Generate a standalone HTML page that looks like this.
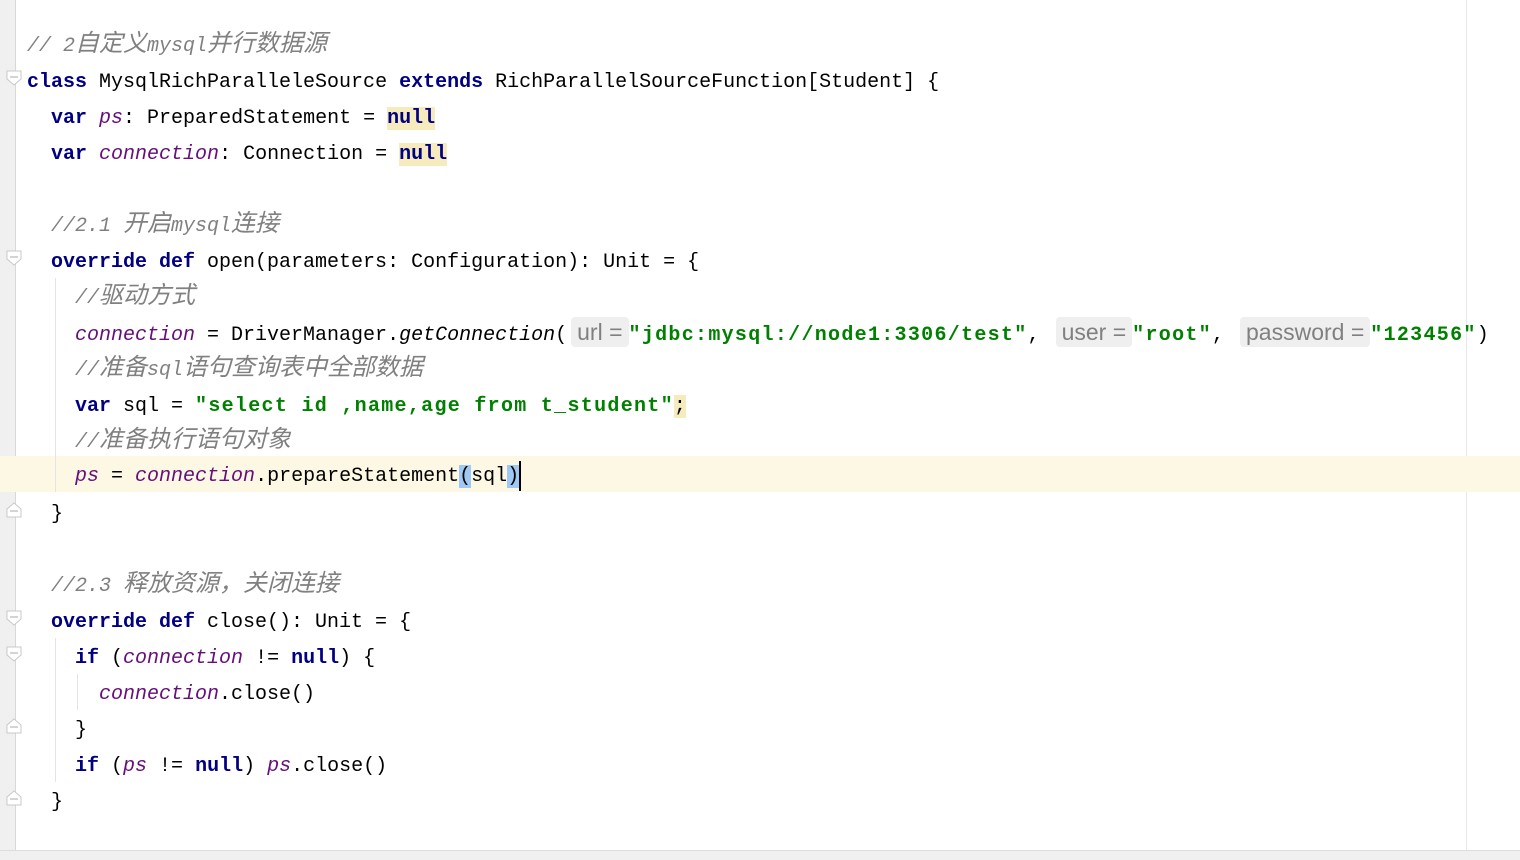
<!DOCTYPE html>
<html><head><meta charset="utf-8"><style>
body{margin:0;width:1520px;height:859px;background:#fff;position:relative;overflow:hidden;font-family:"Liberation Mono","Noto Sans CJK SC",monospace;font-size:20px;color:#000}
.g{position:absolute;left:0;top:0;width:15px;height:850px;background:#f0f0f0;border-right:1px solid #d8d8d8}
.rm{position:absolute;left:1466px;top:0;width:1px;height:850px;background:#e8e8e8}
.sb{position:absolute;left:0;top:850px;width:1520px;height:9px;background:#f0f0f0;border-top:1px solid #ddd}
.hl{position:absolute;left:0;top:456px;width:1520px;height:36px;background:#fdf8e4}
.l{position:absolute;height:36px;line-height:36px;white-space:pre}
.c{color:#808080;font-style:italic}
.z{font-size:24px;line-height:20px}
.k{color:#000080;font-weight:bold}
.p{color:#660e7a;font-style:italic}
.s{color:#008000;font-weight:bold;letter-spacing:1.3px}
.i{font-style:italic}
.n{background:#f6ebbc}
.h{font-family:"Liberation Sans",sans-serif;color:#808080;background:#efefef;border-radius:4px;padding:0 6px;margin-left:4px;font-size:23px;line-height:30px;display:inline-block}
.f{position:absolute;left:6px;width:16px;height:16px}
.vg{position:absolute;width:1px;background:#e4e4e4}
.cur{display:inline-block;width:2px;height:30px;background:#000;vertical-align:middle}
.mb{background:#9fc9f5}
</style></head><body>
<div class="g"></div><div class="rm"></div><div class="hl"></div><div class="sb"></div>
<div class="vg" style="left:55px;top:278px;height:214px"></div>
<div class="vg" style="left:55px;top:638px;height:144px"></div>
<div class="vg" style="left:77px;top:674px;height:36px"></div>
<svg class="f" style="top:70px" viewBox="0 0 16 16"><path d="M1 1H15V9L8 15L1 9Z" fill="#fff" stroke="#c8c8c8"/><path d="M4 7H12" stroke="#aaa"/></svg>
<svg class="f" style="top:250px" viewBox="0 0 16 16"><path d="M1 1H15V9L8 15L1 9Z" fill="#fff" stroke="#c8c8c8"/><path d="M4 7H12" stroke="#aaa"/></svg>
<svg class="f" style="top:610px" viewBox="0 0 16 16"><path d="M1 1H15V9L8 15L1 9Z" fill="#fff" stroke="#c8c8c8"/><path d="M4 7H12" stroke="#aaa"/></svg>
<svg class="f" style="top:646px" viewBox="0 0 16 16"><path d="M1 1H15V9L8 15L1 9Z" fill="#fff" stroke="#c8c8c8"/><path d="M4 7H12" stroke="#aaa"/></svg>
<svg class="f" style="top:502px" viewBox="0 0 16 16"><path d="M1 15H15V7L8 1L1 7Z" fill="#fff" stroke="#c8c8c8"/><path d="M4 9H12" stroke="#aaa"/></svg>
<svg class="f" style="top:718px" viewBox="0 0 16 16"><path d="M1 15H15V7L8 1L1 7Z" fill="#fff" stroke="#c8c8c8"/><path d="M4 9H12" stroke="#aaa"/></svg>
<svg class="f" style="top:790px" viewBox="0 0 16 16"><path d="M1 15H15V7L8 1L1 7Z" fill="#fff" stroke="#c8c8c8"/><path d="M4 9H12" stroke="#aaa"/></svg>

<div class="l" style="left:27px;top:29px"><span class="c">// 2<span class="z">自定义</span>mysql<span class="z">并行数据源</span></span></div>
<div class="l" style="left:27px;top:65px"><span class="k">class</span> MysqlRichParalleleSource <span class="k">extends</span> RichParallelSourceFunction[Student] {</div>
<div class="l" style="left:51px;top:101px"><span class="k">var</span> <span class="p">ps</span>: PreparedStatement = <span class="k n">null</span></div>
<div class="l" style="left:51px;top:137px"><span class="k">var</span> <span class="p">connection</span>: Connection = <span class="k n">null</span></div>
<div class="l" style="left:51px;top:209px"><span class="c">//2.1 <span class="z">开启</span>mysql<span class="z">连接</span></span></div>
<div class="l" style="left:51px;top:245px"><span class="k">override def</span> open(parameters: Configuration): Unit = {</div>
<div class="l" style="left:75px;top:281px"><span class="c">//<span class="z">驱动方式</span></span></div>
<div class="l" style="left:75px;top:317px"><span class="p">connection</span> = DriverManager.<span class="i">getConnection</span>(<span class="h">url =</span><span class="s">"jdbc:mysql://node1:3306/test"</span>, <span class="h">user =</span><span class="s">"root"</span>, <span class="h">password =</span><span class="s">"123456"</span>)</div>
<div class="l" style="left:75px;top:353px"><span class="c">//<span class="z">准备</span>sql<span class="z">语句查询表中全部数据</span></span></div>
<div class="l" style="left:75px;top:389px"><span class="k">var</span> sql = <span class="s">"select id ,name,age from t_student"</span><span class="n">;</span></div>
<div class="l" style="left:75px;top:425px"><span class="c">//<span class="z">准备执行语句对象</span></span></div>
<div class="l" style="left:75px;top:459px"><span class="p">ps</span> = <span class="p">connection</span>.prepareStatement<span class="mb">(</span>sql<span class="mb">)</span><span class="cur"></span></div>
<div class="l" style="left:51px;top:497px">}</div>
<div class="l" style="left:51px;top:569px"><span class="c">//2.3 <span class="z">释放资源，关闭连接</span></span></div>
<div class="l" style="left:51px;top:605px"><span class="k">override def</span> close(): Unit = {</div>
<div class="l" style="left:75px;top:641px"><span class="k">if</span> (<span class="p">connection</span> != <span class="k">null</span>) {</div>
<div class="l" style="left:99px;top:677px"><span class="p">connection</span>.close()</div>
<div class="l" style="left:75px;top:713px">}</div>
<div class="l" style="left:75px;top:749px"><span class="k">if</span> (<span class="p">ps</span> != <span class="k">null</span>) <span class="p">ps</span>.close()</div>
<div class="l" style="left:51px;top:785px">}</div>
</body></html>
